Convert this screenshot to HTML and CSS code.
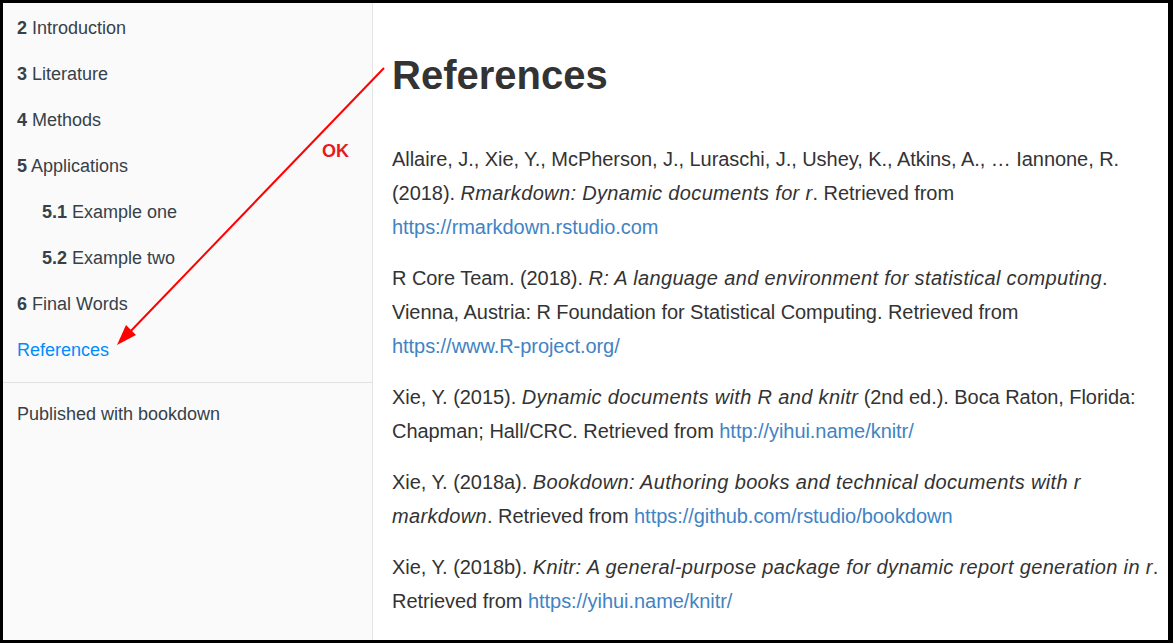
FILE: index.html
```html
<!DOCTYPE html>
<html lang="en">
<head>
  <meta charset="UTF-8">
  <title>References</title>
  <link rel="stylesheet" href="styles.css">
</head>
<body>
  <div class="frame">
    <!-- Book summary -->
    <nav class="book-summary">
      <ul class="summary">
        <li class="chapter"><a href="#"><b>2</b> Introduction</a></li>
        <li class="chapter"><a href="#"><b>3</b> Literature</a></li>
        <li class="chapter"><a href="#"><b>4</b> Methods</a></li>
        <li class="chapter"><a href="#"><b>5</b> Applications</a></li>
        <li class="chapter sub"><a href="#"><b>5.1</b> Example one</a></li>
        <li class="chapter sub"><a href="#"><b>5.2</b> Example two</a></li>
        <li class="chapter"><a href="#"><b>6</b> Final Words</a></li>
        <li class="chapter active"><a href="#">References</a></li>
        <li class="divider"></li>
        <li class="chapter"><a href="#">Published with bookdown</a></li>
      </ul>
    </nav>

    <!-- Page body -->
    <main class="book-body">
      <h1>References</h1>
      <p>Allaire, J., Xie, Y., McPherson, J., Luraschi, J., Ushey, K., Atkins, A., … Iannone, R. (2018). <em>Rmarkdown: Dynamic documents for r</em>. Retrieved from <a href="#">https://rmarkdown.rstudio.com</a></p>
      <p>R Core Team. (2018). <em>R: A language and environment for statistical computing</em>. Vienna, Austria: R Foundation for Statistical Computing. Retrieved from <a href="#">https://www.R-project.org/</a></p>
      <p>Xie, Y. (2015). <em>Dynamic documents with R and knitr</em> (2nd ed.). Boca Raton, Florida: Chapman; Hall/CRC. Retrieved from <a href="#">http://yihui.name/knitr/</a></p>
      <p>Xie, Y. (2018a). <em>Bookdown: Authoring books and technical documents with r markdown</em>. Retrieved from <a href="#">https://github.com/rstudio/bookdown</a></p>
      <p>Xie, Y. (2018b). <em>Knitr: A general-purpose package for dynamic report generation in r</em>. Retrieved from <a href="#">https://yihui.name/knitr/</a></p>
    </main>

    <!-- Annotation drawn over the page -->
    <svg class="annotation" width="1173" height="643" viewBox="0 0 1173 643">
      <line x1="384" y1="68" x2="127" y2="335" stroke="#f00" stroke-width="2"/>
      <polygon points="117,345 136,335 126,325" fill="#f00"/>
    </svg>
    <span class="note">OK</span>
  </div>
</body>
</html>
```

FILE: styles.css
```css
/* General */
body {
  margin: 0;
  font-family: "Liberation Sans", Arial, sans-serif;
  color: #333;
}

.frame {
  position: relative;
  display: flex;
  box-sizing: border-box;
  width: 1173px;
  height: 643px;
  border: 3px solid #000;
  border-right-width: 5px;
  overflow: hidden;
  background-color: #fff;
}

/* Sidebar */
.book-summary {
  flex: 0 0 369px;
  background-color: #fafafa;
  border-right: 1px solid #e4e4e4;
}

.summary {
  list-style: none;
  margin: 0;
  padding: 2px 0 0;
}

.summary li a {
  display: block;
  padding: 12.5px 14px;
  line-height: 21px;
  font-size: 18px;
  color: #364149;
  text-decoration: none;
}

.summary li.sub a {
  padding-left: 39px;
}

.summary li.active a {
  color: #008cff;
}

.summary li.divider {
  height: 1px;
  margin: 9px 0 8px;
  background-color: #e2e2e2;
}

/* Main page */
.book-body {
  flex: 1;
  padding: 0 8px 0 19px;
}

.book-body h1 {
  margin: 48px 0 43px;
  font-size: 40px;
  line-height: 48px;
  font-weight: bold;
}

.book-body p {
  margin: 0 0 17px;
  font-size: 20px;
  line-height: 34px;
  letter-spacing: -0.05px;
}

.book-body em {
  letter-spacing: 0.35px;
}

.book-body a {
  color: #4183c4;
  text-decoration: none;
  white-space: nowrap;
}

/* Annotation */
.annotation {
  position: absolute;
  left: -3px;
  top: -3px;
  pointer-events: none;
}

.note {
  position: absolute;
  left: 319px;
  top: 138px;
  font-size: 18px;
  font-weight: bold;
  color: #e8191f;
}
```
